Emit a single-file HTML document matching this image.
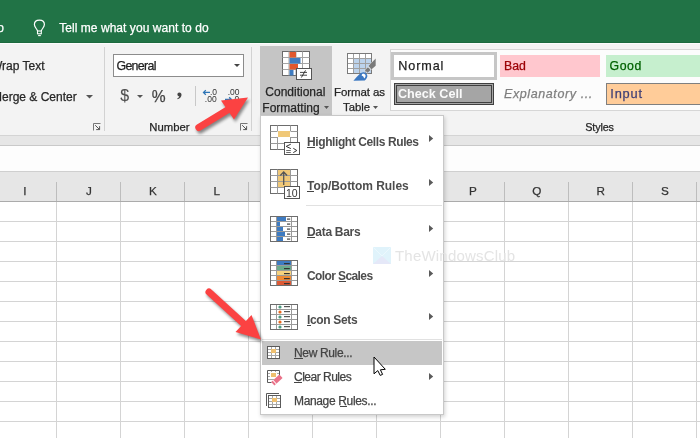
<!DOCTYPE html><html><head><meta charset="utf-8"><style>html,body{margin:0;padding:0;width:700px;height:438px;overflow:hidden;background:#fff;-webkit-text-stroke:0.25px currentColor;font-family:"Liberation Sans", sans-serif;}div{font-family:"Liberation Sans", sans-serif;}</style></head><body><div style="position:relative;width:700px;height:438px;overflow:hidden;will-change:transform"><div style="position:absolute;left:0px;top:0px;width:700px;height:42px;background:#217346"></div>
<div style="position:absolute;left:0px;top:42px;width:700px;height:1px;background:#1c6a3e"></div>
<div style="position:absolute;left:0px;top:43px;width:700px;height:1px;background:#fcfcfc"></div>
<div style="position:absolute;left:-2.8px;top:22.04px;font-size:12px;line-height:12px;color:#ffffff;white-space:pre;">o</div>
<svg style="position:absolute;left:32px;top:19px" width="16" height="18" viewBox="0 0 16 18">
<path d="M5.5,12 C5.2,10 2.4,8.4 2.4,5.6 C2.4,2.9 4.6,1.2 7.4,1.2 C10.2,1.2 12.4,2.9 12.4,5.6 C12.4,8.4 9.6,10 9.3,12" fill="none" stroke="#fff" stroke-width="1.2"/>
<rect x="5.5" y="12" width="3.8" height="2.8" fill="none" stroke="#fff" stroke-width="1.1"/>
<path d="M6.1,16.6 H8.8" stroke="#fff" stroke-width="1.1"/>
</svg>
<div style="position:absolute;left:59.2px;top:21.94px;font-size:12px;line-height:12px;color:#ffffff;white-space:pre;letter-spacing:0.05px;">Tell me what you want to do</div>
<div style="position:absolute;left:0px;top:44px;width:700px;height:91px;background:#f3f3f3"></div>
<div style="position:absolute;left:0px;top:135px;width:700px;height:1px;background:#d4d4d4"></div>
<div style="position:absolute;left:0px;top:136px;width:700px;height:9px;background:#e6e6e6"></div>
<div style="position:absolute;left:0px;top:145px;width:700px;height:1px;background:#c9c9c9"></div>
<div style="position:absolute;left:0px;top:146px;width:700px;height:25px;background:#fdfdfd"></div>
<div style="position:absolute;left:0px;top:171px;width:700px;height:1px;background:#cfcfcf"></div>
<div style="position:absolute;left:0px;top:172px;width:700px;height:29px;background:#e6e6e6"></div>
<div style="position:absolute;left:0px;top:201px;width:700px;height:1px;background:#ababab"></div>
<div style="position:absolute;left:-9px;top:60.14px;font-size:12px;line-height:12px;color:#262626;white-space:pre;">Wrap Text</div>
<div style="position:absolute;left:-8px;top:91.04px;font-size:12px;line-height:12px;color:#262626;white-space:pre;">Merge &amp; Center</div>
<svg style="position:absolute;left:86px;top:95px" width="7" height="4"><path d="M0,0 H7 L3.5,3.5Z" fill="#555"/></svg>
<svg style="position:absolute;left:93px;top:123px" width="8" height="8" viewBox="0 0 8 8"><path d="M0.5,7.5 V0.5 H7.5" fill="none" stroke="#777" stroke-width="1"/><path d="M2.2,2.2 L6.6,6.6 M3.2,6.6 H6.6 V3.2" fill="none" stroke="#555" stroke-width="1"/></svg>
<div style="position:absolute;left:104px;top:47px;width:1px;height:84px;background:#d2d2d2"></div>
<div style="position:absolute;left:113px;top:54px;width:131px;height:23px;background:#fff;border:1px solid #8c8c8c;box-sizing:border-box"></div>
<div style="position:absolute;left:116.4px;top:59.90px;font-size:12.4px;line-height:12.4px;color:#1f1f1f;white-space:pre;letter-spacing:-0.65px;">General</div>
<svg style="position:absolute;left:234px;top:64px" width="6" height="4"><path d="M0,0 H6 L3,3Z" fill="#444"/></svg>
<div style="position:absolute;left:120.3px;top:87.66px;font-size:16px;line-height:16px;color:#505050;white-space:pre;-webkit-text-stroke:0.1px currentColor;">$</div>
<svg style="position:absolute;left:137px;top:95px" width="6" height="4"><path d="M0,0 H6 L3,3Z" fill="#555"/></svg>
<div style="position:absolute;left:151.8px;top:88.69px;font-size:15.6px;line-height:15.6px;color:#444;white-space:pre;">%</div>
<svg style="position:absolute;left:175px;top:91px" width="8" height="10" viewBox="0 0 8 10"><path d="M4.3,1.5 C5.8,1.5 6.6,2.6 6.5,3.9 C6.4,5.8 5.2,7.3 2.6,8.3 L2.2,7.6 C3.5,6.9 4.2,6.1 4.3,5.3 C3.3,5.2 2.4,4.5 2.4,3.4 C2.4,2.3 3.2,1.5 4.3,1.5 Z" fill="#444"/></svg>
<div style="position:absolute;left:195px;top:86px;width:1px;height:20px;background:#c8c8c8"></div>
<svg style="position:absolute;left:202px;top:88px" width="40" height="16" viewBox="0 0 40 16">
<path d="M1.5,4.4 H8 M3.8,2.1 L1.5,4.4 L3.8,6.7" fill="none" stroke="#2e75b6" stroke-width="1.3"/>
<text x="7.9" y="7" font-family="Liberation Sans" font-size="8.5" fill="#333">.0</text>
<text x="2.8" y="13.8" font-family="Liberation Sans" font-size="8.5" fill="#333">.00</text>
<text x="25.7" y="7" font-family="Liberation Sans" font-size="8.5" fill="#333">.00</text>
<path d="M23,11.5 H29.5 M27.2,9.2 L29.5,11.5 L27.2,13.8" fill="none" stroke="#2e75b6" stroke-width="1.3"/>
<text x="30.2" y="13.8" font-family="Liberation Sans" font-size="8.5" fill="#333">.0</text>
</svg>
<div style="position:absolute;left:149.3px;top:122.03px;font-size:11.3px;line-height:11.3px;color:#262626;white-space:pre;">Number</div>
<svg style="position:absolute;left:240px;top:123px" width="8" height="8" viewBox="0 0 8 8"><path d="M0.5,7.5 V0.5 H7.5" fill="none" stroke="#777" stroke-width="1"/><path d="M2.2,2.2 L6.6,6.6 M3.2,6.6 H6.6 V3.2" fill="none" stroke="#555" stroke-width="1"/></svg>
<div style="position:absolute;left:251px;top:47px;width:1px;height:84px;background:#d2d2d2"></div>
<div style="position:absolute;left:260px;top:46px;width:72px;height:69px;background:#c5c5c5"></div>
<svg style="position:absolute;left:281px;top:50px" width="32" height="32" viewBox="0 0 32 32">
<rect x="1.5" y="1.5" width="27" height="24" fill="#fff" stroke="#6a6a6a" stroke-width="1"/>
<path d="M8,1.5 V25.5 M15,1.5 V25.5 M21.5,1.5 V25.5 M1.5,7.5 H28.5 M1.5,13.5 H28.5 M1.5,19.5 H28.5" stroke="#a5a5a5" stroke-width="1" fill="none"/>
<rect x="8.5" y="2" width="6.5" height="5.5" fill="#e0582e"/>
<rect x="8.5" y="8" width="11" height="5.5" fill="#3f7cc0"/>
<rect x="8.5" y="14" width="8.5" height="5.5" fill="#e0582e"/>
<rect x="8.5" y="20" width="4" height="5.5" fill="#3f7cc0"/>
<rect x="15.5" y="18.5" width="15" height="11" fill="#fff" stroke="#555" stroke-width="1"/>
<path d="M19,22.4 H26 M19,25.2 H26" stroke="#333" stroke-width="0.9" fill="none"/><path d="M24.5,20.4 L20.4,27.5" stroke="#333" stroke-width="1" fill="none"/>
</svg>
<div style="position:absolute;left:265.3px;top:85.64px;font-size:12px;line-height:12px;color:#262626;white-space:pre;">Conditional</div>
<div style="position:absolute;left:262.3px;top:101.64px;font-size:12px;line-height:12px;color:#262626;white-space:pre;">Formatting</div>
<svg style="position:absolute;left:324px;top:106px" width="6" height="4"><path d="M0,0 H5 L2.5,3Z" fill="#555"/></svg>
<svg style="position:absolute;left:346px;top:52px" width="32" height="32" viewBox="0 0 32 32">
<rect x="1.5" y="1.5" width="24" height="20" fill="#fff"/>
<rect x="7.5" y="6.5" width="18" height="15" fill="#bcd3ec"/>
<path d="M7.5,1.5 V21.5 M13.5,1.5 V21.5 M19.5,1.5 V21.5 M1.5,6.5 H25.5 M1.5,11.5 H25.5 M1.5,16.5 H25.5" stroke="#a0a0a0" fill="none"/>
<rect x="1.5" y="1.5" width="24" height="20" fill="none" stroke="#7a7a7a"/>
<path d="M29.7,6.6 L29.7,13.8 L25.6,17.3 L22.4,14.1 Z" fill="#7a7a7a" stroke="#f6f6f6" stroke-width="0.8" paint-order="stroke"/>
<path d="M21.9,15.2 L24.6,17.9 L21.6,20.8 L18.9,18.3 Z" fill="#7a7a7a" stroke="#f6f6f6" stroke-width="0.8" paint-order="stroke"/>
<path d="M7.4,28.7 L18.8,28.4 C20.6,27 21.8,24.8 21.2,23 C20.6,21.1 18.8,20 17.3,20.2 C16,20.4 15,20.9 14.2,21.6 C11.8,23.6 9.4,26.6 7.4,28.7 Z" fill="#3b78c2"/>
<path d="M16,22.2 C17.3,21.4 19.1,22 19.5,23.3 C19.8,24.4 19.2,25.6 18.2,26.4 C17.8,25 17,24 15.6,23.5 Z" fill="#fff"/>
</svg>
<div style="position:absolute;left:334px;top:86.87px;font-size:11.5px;line-height:11.5px;color:#262626;white-space:pre;letter-spacing:-0.1px;">Format as</div>
<div style="position:absolute;left:343px;top:102.13px;font-size:11.3px;line-height:11.3px;color:#262626;white-space:pre;">Table</div>
<svg style="position:absolute;left:373px;top:106px" width="6" height="4"><path d="M0,0 H5 L2.5,3Z" fill="#555"/></svg>
<div style="position:absolute;left:390px;top:49px;width:320px;height:62px;background:#fcfcfc;border:1px solid #d6d6d6;box-sizing:border-box"></div>
<div style="position:absolute;left:391px;top:52px;width:106px;height:28px;background:#fff;border:3px solid #c6c6c6;box-sizing:border-box"></div>
<div style="position:absolute;left:398.3px;top:60.03px;font-size:12.6px;line-height:12.6px;color:#1f1f1f;white-space:pre;letter-spacing:0.9px;">Normal</div>
<div style="position:absolute;left:500px;top:55px;width:100px;height:22px;background:#ffc7ce"></div>
<div style="position:absolute;left:504px;top:60.09px;font-size:12.3px;line-height:12.3px;color:#9c0006;white-space:pre;">Bad</div>
<div style="position:absolute;left:606px;top:55px;width:100px;height:22px;background:#c6efce"></div>
<div style="position:absolute;left:609.5px;top:60.09px;font-size:12.3px;line-height:12.3px;color:#006100;white-space:pre;letter-spacing:0.6px;">Good</div>
<div style="position:absolute;left:394px;top:83px;width:100px;height:22px;background:#a5a5a5;border:1px solid #3f3f3f;box-shadow:inset 0 0 0 1px #a5a5a5, inset 0 0 0 2px #3f3f3f;box-sizing:border-box"></div>
<div style="position:absolute;left:398px;top:87.83px;font-size:12.6px;line-height:12.6px;color:#fafafa;white-space:pre;font-weight:700;-webkit-text-stroke:0;">Check Cell</div>
<div style="position:absolute;left:504px;top:87.82px;font-size:12.5px;line-height:12.5px;color:#7f7f7f;white-space:pre;font-style:italic;letter-spacing:0.6px;">Explanatory ...</div>
<div style="position:absolute;left:606px;top:83px;width:100px;height:22px;background:#ffcc99;border:1px solid #7f7f7f;box-sizing:border-box"></div>
<div style="position:absolute;left:610.3px;top:88.26px;font-size:12.8px;line-height:12.8px;color:#3f3f76;white-space:pre;letter-spacing:0.8px;">Input</div>
<div style="position:absolute;left:585.3px;top:122.26px;font-size:10.8px;line-height:10.8px;color:#262626;white-space:pre;letter-spacing:-0.15px;">Styles</div>
<div style="position:absolute;left:0px;top:202px;width:700px;height:236px;background:#ffffff"></div>
<div style="position:absolute;left:56px;top:182px;width:1px;height:19px;background:#bdbdbd"></div>
<div style="position:absolute;left:56px;top:202px;width:1px;height:236px;background:#d4d4d4"></div>
<div style="position:absolute;left:120px;top:182px;width:1px;height:19px;background:#bdbdbd"></div>
<div style="position:absolute;left:120px;top:202px;width:1px;height:236px;background:#d4d4d4"></div>
<div style="position:absolute;left:184px;top:182px;width:1px;height:19px;background:#bdbdbd"></div>
<div style="position:absolute;left:184px;top:202px;width:1px;height:236px;background:#d4d4d4"></div>
<div style="position:absolute;left:248px;top:182px;width:1px;height:19px;background:#bdbdbd"></div>
<div style="position:absolute;left:248px;top:202px;width:1px;height:236px;background:#d4d4d4"></div>
<div style="position:absolute;left:312px;top:182px;width:1px;height:19px;background:#bdbdbd"></div>
<div style="position:absolute;left:312px;top:202px;width:1px;height:236px;background:#d4d4d4"></div>
<div style="position:absolute;left:376px;top:182px;width:1px;height:19px;background:#bdbdbd"></div>
<div style="position:absolute;left:376px;top:202px;width:1px;height:236px;background:#d4d4d4"></div>
<div style="position:absolute;left:440px;top:182px;width:1px;height:19px;background:#bdbdbd"></div>
<div style="position:absolute;left:440px;top:202px;width:1px;height:236px;background:#d4d4d4"></div>
<div style="position:absolute;left:504px;top:182px;width:1px;height:19px;background:#bdbdbd"></div>
<div style="position:absolute;left:504px;top:202px;width:1px;height:236px;background:#d4d4d4"></div>
<div style="position:absolute;left:568px;top:182px;width:1px;height:19px;background:#bdbdbd"></div>
<div style="position:absolute;left:568px;top:202px;width:1px;height:236px;background:#d4d4d4"></div>
<div style="position:absolute;left:632px;top:182px;width:1px;height:19px;background:#bdbdbd"></div>
<div style="position:absolute;left:632px;top:202px;width:1px;height:236px;background:#d4d4d4"></div>
<div style="position:absolute;left:696px;top:182px;width:1px;height:19px;background:#bdbdbd"></div>
<div style="position:absolute;left:696px;top:202px;width:1px;height:236px;background:#d4d4d4"></div>
<div style="position:absolute;left:0px;top:221px;width:700px;height:1px;background:#d4d4d4"></div>
<div style="position:absolute;left:0px;top:241px;width:700px;height:1px;background:#d4d4d4"></div>
<div style="position:absolute;left:0px;top:261px;width:700px;height:1px;background:#d4d4d4"></div>
<div style="position:absolute;left:0px;top:281px;width:700px;height:1px;background:#d4d4d4"></div>
<div style="position:absolute;left:0px;top:301px;width:700px;height:1px;background:#d4d4d4"></div>
<div style="position:absolute;left:0px;top:321px;width:700px;height:1px;background:#d4d4d4"></div>
<div style="position:absolute;left:0px;top:341px;width:700px;height:1px;background:#d4d4d4"></div>
<div style="position:absolute;left:0px;top:361px;width:700px;height:1px;background:#d4d4d4"></div>
<div style="position:absolute;left:0px;top:381px;width:700px;height:1px;background:#d4d4d4"></div>
<div style="position:absolute;left:0px;top:401px;width:700px;height:1px;background:#d4d4d4"></div>
<div style="position:absolute;left:0px;top:421px;width:700px;height:1px;background:#d4d4d4"></div>
<div style="position:absolute;left:4.800000000000001px;top:185.00px;width:40px;text-align:center;font-size:11.7px;line-height:11.7px;color:#333">I</div>
<div style="position:absolute;left:68.8px;top:185.00px;width:40px;text-align:center;font-size:11.7px;line-height:11.7px;color:#333">J</div>
<div style="position:absolute;left:132.8px;top:185.00px;width:40px;text-align:center;font-size:11.7px;line-height:11.7px;color:#333">K</div>
<div style="position:absolute;left:196.8px;top:185.00px;width:40px;text-align:center;font-size:11.7px;line-height:11.7px;color:#333">L</div>
<div style="position:absolute;left:260.8px;top:185.00px;width:40px;text-align:center;font-size:11.7px;line-height:11.7px;color:#333">M</div>
<div style="position:absolute;left:324.8px;top:185.00px;width:40px;text-align:center;font-size:11.7px;line-height:11.7px;color:#333">N</div>
<div style="position:absolute;left:388.8px;top:185.00px;width:40px;text-align:center;font-size:11.7px;line-height:11.7px;color:#333">O</div>
<div style="position:absolute;left:452.8px;top:185.00px;width:40px;text-align:center;font-size:11.7px;line-height:11.7px;color:#333">P</div>
<div style="position:absolute;left:516.8px;top:185.00px;width:40px;text-align:center;font-size:11.7px;line-height:11.7px;color:#333">Q</div>
<div style="position:absolute;left:580.8px;top:185.00px;width:40px;text-align:center;font-size:11.7px;line-height:11.7px;color:#333">R</div>
<div style="position:absolute;left:644.8px;top:185.00px;width:40px;text-align:center;font-size:11.7px;line-height:11.7px;color:#333">S</div>
<div style="position:absolute;left:260px;top:115px;width:184px;height:300px;background:#fff;border:1px solid #c8c8c8;box-sizing:border-box;box-shadow:1px 2px 4px rgba(0,0,0,0.18)"></div>
<svg style="position:absolute;left:269px;top:124px" width="34" height="34" viewBox="0 0 34 34">
<rect x="1.5" y="1.5" width="27" height="24" fill="#fff" stroke="#6d6d6d"/>
<rect x="9" y="7" width="12" height="6" fill="#f0c878"/>
<path d="M8.5,1.5 V7 M8.5,13 V25.5 M21.5,1.5 V7 M21.5,13 V25.5 M1.5,7.5 H8.5 M21.5,7.5 H28.5 M1.5,13.5 H8.5 M21.5,13.5 H28.5 M1.5,19.5 H28.5" stroke="#9a9a9a" fill="none"/>
<rect x="15.5" y="18.5" width="15" height="12" fill="#fff" stroke="#555"/>
<path d="M21.8,20.2 L17.2,22.4 L21.8,24.6 M24.3,24.3 L27.8,26.5 L24.3,28.6" stroke="#333" stroke-width="1" fill="none"/>
<path d="M17.2,26.5 H21.8 M17.2,28.5 H21.8" stroke="#444" stroke-width="0.8" fill="none"/>
</svg>
<div style="position:absolute;left:307px;top:135.64px;font-size:12px;line-height:12px;color:#4d4d4d;white-space:pre;font-weight:700;-webkit-text-stroke:0;letter-spacing:-0.4px;">Highlight Cells Rules</div>
<div style="position:absolute;left:307px;top:147px;width:8px;height:1px;background:#444"></div>
<svg style="position:absolute;left:429px;top:135px" width="5" height="7"><path d="M0,0 L4.2,3.5 L0,7Z" fill="#5a5a5a"/></svg>
<svg style="position:absolute;left:269px;top:168px" width="34" height="34" viewBox="0 0 34 34">
<rect x="1.5" y="1.5" width="27" height="24" fill="#fff" stroke="#6d6d6d"/>
<rect x="9" y="2" width="12" height="18" fill="#f0c878"/>
<path d="M8.5,1.5 V25.5 M21.5,1.5 V25.5 M1.5,7.5 H28.5 M1.5,13.5 H28.5 M1.5,19.5 H28.5" stroke="#9a9a9a" fill="none"/>
<path d="M14.7,17 V4 M11.3,7.5 L14.7,4 L18.1,7.5" stroke="#555" stroke-width="1.3" fill="none"/>
<rect x="15.5" y="18.5" width="15" height="12" fill="#fff" stroke="#555"/>
<text x="17" y="29" font-family="Liberation Sans" font-size="10.5" fill="#333" style="-webkit-text-stroke:0.2px #333">10</text>
</svg>
<div style="position:absolute;left:307px;top:179.84px;font-size:12px;line-height:12px;color:#4d4d4d;white-space:pre;font-weight:700;-webkit-text-stroke:0;letter-spacing:-0.05px;">Top/Bottom Rules</div>
<div style="position:absolute;left:307px;top:191px;width:7px;height:1px;background:#444"></div>
<svg style="position:absolute;left:429px;top:179px" width="5" height="7"><path d="M0,0 L4.2,3.5 L0,7Z" fill="#5a5a5a"/></svg>
<div style="position:absolute;left:306px;top:205px;width:136px;height:1px;background:#e1e1e1"></div>
<svg style="position:absolute;left:269px;top:215px" width="30" height="28" viewBox="0 0 30 28"><rect x="1.5" y="1.5" width="27" height="25" fill="#fff"/><rect x="8" y="2" width="9" height="4" fill="#3e7bc1"/><rect x="18" y="3.5" width="3.2" height="1.2" fill="#444"/><rect x="8" y="7" width="3" height="4" fill="#3e7bc1"/><rect x="18" y="8.5" width="3.2" height="1.2" fill="#444"/><rect x="8" y="12" width="6" height="4" fill="#3e7bc1"/><rect x="18" y="13.5" width="3.2" height="1.2" fill="#444"/><rect x="8" y="17" width="8" height="4" fill="#3e7bc1"/><rect x="18" y="18.5" width="3.2" height="1.2" fill="#444"/><rect x="8" y="22" width="6" height="4" fill="#3e7bc1"/><rect x="18" y="23.5" width="3.2" height="1.2" fill="#444"/><path d="M7.5,1.5 V26.5 M22.5,1.5 V26.5 M1.5,6.5 H28.5 M1.5,11.5 H28.5 M1.5,16.5 H28.5 M1.5,21.5 H28.5" stroke="#9a9a9a" fill="none"/><rect x="1.5" y="1.5" width="27" height="25" fill="none" stroke="#6d6d6d"/></svg>
<div style="position:absolute;left:307px;top:225.94px;font-size:12px;line-height:12px;color:#4d4d4d;white-space:pre;font-weight:700;-webkit-text-stroke:0;letter-spacing:-0.3px;">Data Bars</div>
<div style="position:absolute;left:307px;top:237px;width:8px;height:1px;background:#444"></div>
<svg style="position:absolute;left:429px;top:225px" width="5" height="7"><path d="M0,0 L4.2,3.5 L0,7Z" fill="#5a5a5a"/></svg>
<svg style="position:absolute;left:269px;top:259px" width="30" height="28" viewBox="0 0 30 28"><rect x="1.5" y="1.5" width="27" height="25" fill="#fff"/><rect x="8" y="2" width="14" height="4" fill="#3e7bc1"/><rect x="15" y="4" width="5.8" height="1.2" fill="#333"/><rect x="8" y="7" width="14" height="4" fill="#6aab8c"/><rect x="15" y="9" width="5.8" height="1.2" fill="#333"/><rect x="8" y="12" width="14" height="4" fill="#f6d37f"/><rect x="15" y="14" width="5.8" height="1.2" fill="#333"/><rect x="8" y="17" width="14" height="4" fill="#ef8b35"/><rect x="15" y="19" width="5.8" height="1.2" fill="#333"/><rect x="8" y="22" width="14" height="4" fill="#dd5a35"/><rect x="15" y="24" width="5.8" height="1.2" fill="#333"/><path d="M7.5,1.5 V26.5 M22.5,1.5 V26.5 M1.5,6.5 H28.5 M1.5,11.5 H28.5 M1.5,16.5 H28.5 M1.5,21.5 H28.5" stroke="#9a9a9a" fill="none"/><rect x="1.5" y="1.5" width="27" height="25" fill="none" stroke="#6d6d6d"/></svg>
<div style="position:absolute;left:307px;top:269.84px;font-size:12px;line-height:12px;color:#4d4d4d;white-space:pre;font-weight:700;-webkit-text-stroke:0;letter-spacing:-0.6px;">Color Scales</div>
<div style="position:absolute;left:339px;top:281px;width:7px;height:1px;background:#444"></div>
<svg style="position:absolute;left:429px;top:269.5px" width="5" height="7"><path d="M0,0 L4.2,3.5 L0,7Z" fill="#5a5a5a"/></svg>
<svg style="position:absolute;left:269px;top:303px" width="30" height="28" viewBox="0 0 30 28"><rect x="1.5" y="1.5" width="27" height="25" fill="#fff"/><circle cx="11" cy="4" r="1.6" fill="#4f9c80"/><rect x="15" y="3" width="6" height="1.2" fill="#555"/><circle cx="11" cy="9" r="1.6" fill="#e96a1f"/><rect x="15" y="8" width="6" height="1.2" fill="#555"/><circle cx="11" cy="14" r="1.6" fill="#4f9c80"/><rect x="15" y="13" width="6" height="1.2" fill="#555"/><circle cx="11" cy="19" r="1.6" fill="#e96a1f"/><rect x="15" y="18" width="6" height="1.2" fill="#555"/><circle cx="11" cy="24" r="1.6" fill="#4f9c80"/><rect x="15" y="23" width="6" height="1.2" fill="#555"/><path d="M7.5,1.5 V26.5 M22.5,1.5 V26.5 M1.5,6.5 H28.5 M1.5,11.5 H28.5 M1.5,16.5 H28.5 M1.5,21.5 H28.5" stroke="#9a9a9a" fill="none"/><rect x="1.5" y="1.5" width="27" height="25" fill="none" stroke="#6d6d6d"/></svg>
<div style="position:absolute;left:307px;top:313.84px;font-size:12px;line-height:12px;color:#4d4d4d;white-space:pre;font-weight:700;-webkit-text-stroke:0;letter-spacing:-0.35px;">Icon Sets</div>
<div style="position:absolute;left:307px;top:325px;width:4px;height:1px;background:#444"></div>
<svg style="position:absolute;left:429px;top:313px" width="5" height="7"><path d="M0,0 L4.2,3.5 L0,7Z" fill="#5a5a5a"/></svg>
<div style="position:absolute;left:262px;top:339px;width:180px;height:1px;background:#e1e1e1"></div>
<div style="position:absolute;left:262px;top:341px;width:180px;height:24px;background:#c6c6c6"></div>
<svg style="position:absolute;left:266px;top:345px" width="18" height="18" viewBox="0 0 18 18">
<rect x="1.5" y="1.5" width="12" height="12" fill="#fff" stroke="#5a5a5a"/>
<path d="M2,4.5 H13 M2,7.5 H13 M2,10.5 H13 M5.5,2 V13 M9.5,2 V13" stroke="#a8a8a8" fill="none"/>
<rect x="5" y="4" width="5" height="4" fill="#efc070"/>
</svg>
<div style="position:absolute;left:294px;top:347.04px;font-size:12px;line-height:12px;color:#444444;white-space:pre;letter-spacing:-0.35px;">New Rule...</div>
<div style="position:absolute;left:294px;top:358px;width:9px;height:1px;background:#444"></div>
<svg style="position:absolute;left:266px;top:368px" width="18" height="18" viewBox="0 0 18 18">
<rect x="1.5" y="2.5" width="12" height="12" fill="#fff"/>
<path d="M5.5,14.5 H1.5 V2.5 H13.5 V7" fill="none" stroke="#5a5a5a"/>
<path d="M2,5.5 H4 M2,8.5 H4 M2,11.5 H8 M11,5.5 H13 M5.5,3 V4 M9.5,3 V4" stroke="#a8a8a8" fill="none"/>
<rect x="5" y="5" width="5" height="4" fill="#efc070"/>
<g transform="translate(10.9,12) rotate(-42)"><rect x="-5.5" y="-2.4" width="11" height="4.8" fill="#ea7289"/><rect x="-3.6" y="-2.6" width="0.9" height="5.2" fill="#fff"/></g>
</svg>
<div style="position:absolute;left:294px;top:371.44px;font-size:12px;line-height:12px;color:#444444;white-space:pre;letter-spacing:-0.5px;">Clear Rules</div>
<div style="position:absolute;left:294px;top:382px;width:8px;height:1px;background:#444"></div>
<svg style="position:absolute;left:429px;top:373px" width="5" height="7"><path d="M0,0 L4.2,3.5 L0,7Z" fill="#5a5a5a"/></svg>
<svg style="position:absolute;left:265px;top:392px" width="18" height="18" viewBox="0 0 18 18">
<path d="M1.5,14 V1.5 H14" fill="none" stroke="#5a5a5a"/>
<rect x="3.5" y="3.5" width="12" height="12" fill="#fff" stroke="#5a5a5a"/>
<path d="M4,6.5 H15 M4,9.5 H15 M4,12.5 H15 M7.5,4 V15 M11.5,4 V15" stroke="#a8a8a8" fill="none"/>
<rect x="7" y="6" width="5" height="4" fill="#efc070"/>
</svg>
<div style="position:absolute;left:294px;top:395.34px;font-size:12px;line-height:12px;color:#444444;white-space:pre;letter-spacing:-0.35px;">Manage Rules...</div>
<div style="position:absolute;left:340px;top:406px;width:7px;height:1px;background:#444"></div>
<svg style="position:absolute;left:373px;top:247px" width="18" height="17" viewBox="0 0 18 17">
<rect x="0" y="0" width="18" height="17" fill="#e0f3fb"/>
<path d="M0,17 L9,9 L18,17 Z" fill="#e5e8f8"/>
<path d="M0.5,0.5 L9,9 L17.5,0.5" stroke="#ecf8fd" stroke-width="1" fill="none"/>
</svg>
<div style="position:absolute;left:395px;top:248.30px;font-size:15px;line-height:15px;color:#e4e4e4;white-space:pre;letter-spacing:0.2px;-webkit-text-stroke:0;">TheWindowsClub</div>
<svg style="position:absolute;left:373px;top:356px" width="14" height="21" viewBox="0 0 14 21">
<path d="M1,1 V17.8 L4.8,14.6 L7.2,19.4 L9.6,18.4 L7.4,13.8 L12.3,13.3 Z" fill="#fff" stroke="#000" stroke-width="1" stroke-linejoin="round"/>
</svg>
<svg style="position:absolute;left:0;top:0;overflow:visible" width="700" height="438">
<defs><filter id="sh198" x="-20%" y="-20%" width="140%" height="140%"><feGaussianBlur stdDeviation="1.8"/></filter></defs>
<g transform="translate(1.5,2.5)" opacity="0.45" filter="url(#sh198)">
<line x1="198.8" y1="127.5" x2="227.5" y2="110.0" stroke="#000" stroke-width="7" stroke-linecap="round"/>
<polygon points="248,97.5 221,100.5 234,119.5" fill="#000"/>
</g>
<line x1="198.8" y1="127.5" x2="227.5" y2="110.0" stroke="#fb4242" stroke-width="7" stroke-linecap="round"/>
<polygon points="248,97.5 221,100.5 234,119.5" fill="#fb4242"/>
</svg>
<svg style="position:absolute;left:0;top:0;overflow:visible" width="700" height="438">
<defs><filter id="sh209" x="-20%" y="-20%" width="140%" height="140%"><feGaussianBlur stdDeviation="1.8"/></filter></defs>
<g transform="translate(1.5,2.5)" opacity="0.45" filter="url(#sh209)">
<line x1="209" y1="292" x2="243.5" y2="323.5" stroke="#000" stroke-width="7" stroke-linecap="round"/>
<polygon points="261,339.5 251.5,315 235.5,332" fill="#000"/>
</g>
<line x1="209" y1="292" x2="243.5" y2="323.5" stroke="#fb4242" stroke-width="7" stroke-linecap="round"/>
<polygon points="261,339.5 251.5,315 235.5,332" fill="#fb4242"/>
</svg></div></body></html>
